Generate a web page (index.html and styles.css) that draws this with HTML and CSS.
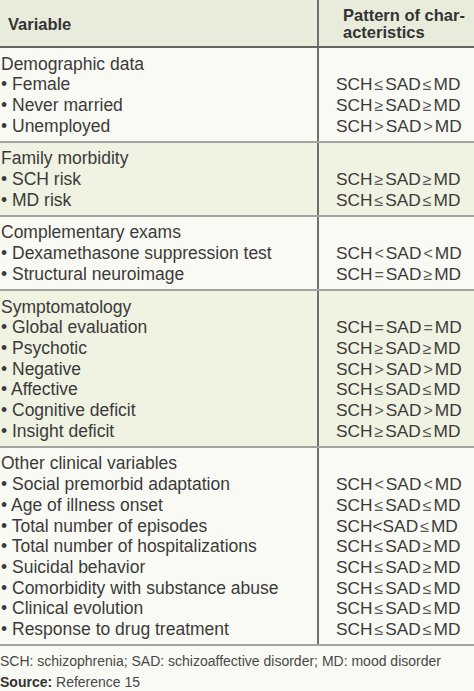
FILE: index.html
```html
<!DOCTYPE html>
<html lang="en">
<head>
<meta charset="utf-8">
<title>Pattern of characteristics</title>
<link rel="stylesheet" href="styles.css">
</head>
<body>
<div class="table">
  <div class="head">
    <div class="hcell var">Variable</div>
    <div class="hcell pat">Pattern of char-<br>acteristics</div>
  </div>
  <div class="group light">
    <div class="col left">
      <div>Demographic data</div>
      <div>• Female</div>
      <div>• Never married</div>
      <div>• Unemployed</div>
    </div>
    <div class="col right">
      <div>&nbsp;</div>
      <div>SCH<span class="op">≤</span>SAD<span class="op">≤</span>MD</div>
      <div>SCH<span class="op">≥</span>SAD<span class="op">≥</span>MD</div>
      <div>SCH<span class="op">&gt;</span>SAD<span class="op">&gt;</span>MD</div>
    </div>
  </div>
  <div class="group tint">
    <div class="col left">
      <div>Family morbidity</div>
      <div>• SCH risk</div>
      <div>• MD risk</div>
    </div>
    <div class="col right">
      <div>&nbsp;</div>
      <div>SCH<span class="op">≥</span>SAD<span class="op">≥</span>MD</div>
      <div>SCH<span class="op">≤</span>SAD<span class="op">≤</span>MD</div>
    </div>
  </div>
  <div class="group light">
    <div class="col left">
      <div>Complementary exams</div>
      <div>• Dexamethasone suppression test</div>
      <div>• Structural neuroimage</div>
    </div>
    <div class="col right">
      <div>&nbsp;</div>
      <div>SCH<span class="op">&lt;</span>SAD<span class="op">&lt;</span>MD</div>
      <div>SCH<span class="op">=</span>SAD<span class="op">≥</span>MD</div>
    </div>
  </div>
  <div class="group tint">
    <div class="col left">
      <div>Symptomatology</div>
      <div>• Global evaluation</div>
      <div>• Psychotic</div>
      <div>• Negative</div>
      <div>• Affective</div>
      <div>• Cognitive deficit</div>
      <div>• Insight deficit</div>
    </div>
    <div class="col right">
      <div>&nbsp;</div>
      <div>SCH<span class="op">=</span>SAD<span class="op">=</span>MD</div>
      <div>SCH<span class="op">≥</span>SAD<span class="op">≥</span>MD</div>
      <div>SCH<span class="op">&gt;</span>SAD<span class="op">&gt;</span>MD</div>
      <div>SCH<span class="op">≤</span>SAD<span class="op">≤</span>MD</div>
      <div>SCH<span class="op">&gt;</span>SAD<span class="op">&gt;</span>MD</div>
      <div>SCH<span class="op">≥</span>SAD<span class="op">≤</span>MD</div>
    </div>
  </div>
  <div class="group light">
    <div class="col left">
      <div>Other clinical variables</div>
      <div>• Social premorbid adaptation</div>
      <div>• Age of illness onset</div>
      <div>• Total number of episodes</div>
      <div>• Total number of hospitalizations</div>
      <div>• Suicidal behavior</div>
      <div>• Comorbidity with substance abuse</div>
      <div>• Clinical evolution</div>
      <div>• Response to drug treatment</div>
    </div>
    <div class="col right">
      <div>&nbsp;</div>
      <div>SCH<span class="op">&lt;</span>SAD<span class="op">&lt;</span>MD</div>
      <div>SCH<span class="op">≤</span>SAD<span class="op">≤</span>MD</div>
      <div>SCH&lt;SAD<span class="op">≤</span>MD</div>
      <div>SCH<span class="op">≤</span>SAD<span class="op">≥</span>MD</div>
      <div>SCH<span class="op">≤</span>SAD<span class="op">≥</span>MD</div>
      <div>SCH<span class="op">≤</span>SAD<span class="op">≤</span>MD</div>
      <div>SCH<span class="op">≤</span>SAD<span class="op">≤</span>MD</div>
      <div>SCH<span class="op">≤</span>SAD<span class="op">≤</span>MD</div>
    </div>
  </div>
</div>
<div class="notes">
  <p class="note">SCH: schizophrenia; SAD: schizoaffective disorder; MD: mood disorder</p>
  <p class="note"><b>Source:</b> Reference 15</p>
</div>
</body>
</html>
```

FILE: styles.css
```css
html, body {
  margin: 0;
  padding: 0;
  background: #fafaf4;
}
body {
  width: 474px;
  height: 691px;
  overflow: hidden;
  font-family: "Liberation Sans", Arial, sans-serif;
  color: #3a3a3a;
}
.table {
  width: 474px;
}
.head {
  display: grid;
  grid-template-columns: 317px 1fr;
  background: #e9ecdb;
  border-bottom: 2px solid #666;
  height: 46px;
}
.hcell {
  font-weight: bold;
  font-size: 16.5px;
  line-height: 17px;
  color: #333;
  display: flex;
  align-items: center;
}
.hcell.var {
  padding-left: 8px;
  padding-top: 2px;
}
.hcell.pat {
  border-left: 2px solid #707070;
  padding-left: 24px;
  padding-top: 2px;
}
.group {
  display: grid;
  grid-template-columns: 317px 1fr;
  border-bottom: 2px solid #a3a3a0;
}
.group.light {
  background: #fafaf4;
}
.group.tint {
  background: #f0f2e2;
}
.col {
  font-size: 17.3px;
  line-height: 20.7px;
  padding-top: 5.5px;
  padding-bottom: 4.5px;
}
.col.left {
  padding-left: 1px;
  font-size: 17.5px;
  white-space: nowrap;
}
.col.right {
  border-left: 2px solid #707070;
  padding-left: 17px;
  white-space: nowrap;
}
.op {
  font-size: 16px;
  line-height: 0;
  padding: 0 2px;
  color: #555;
}
.notes {
  padding-top: 5px;
}
.note {
  margin: 0;
  font-size: 14px;
  line-height: 20.5px;
  color: #484848;
}
.note b {
  color: #333;
}
```
